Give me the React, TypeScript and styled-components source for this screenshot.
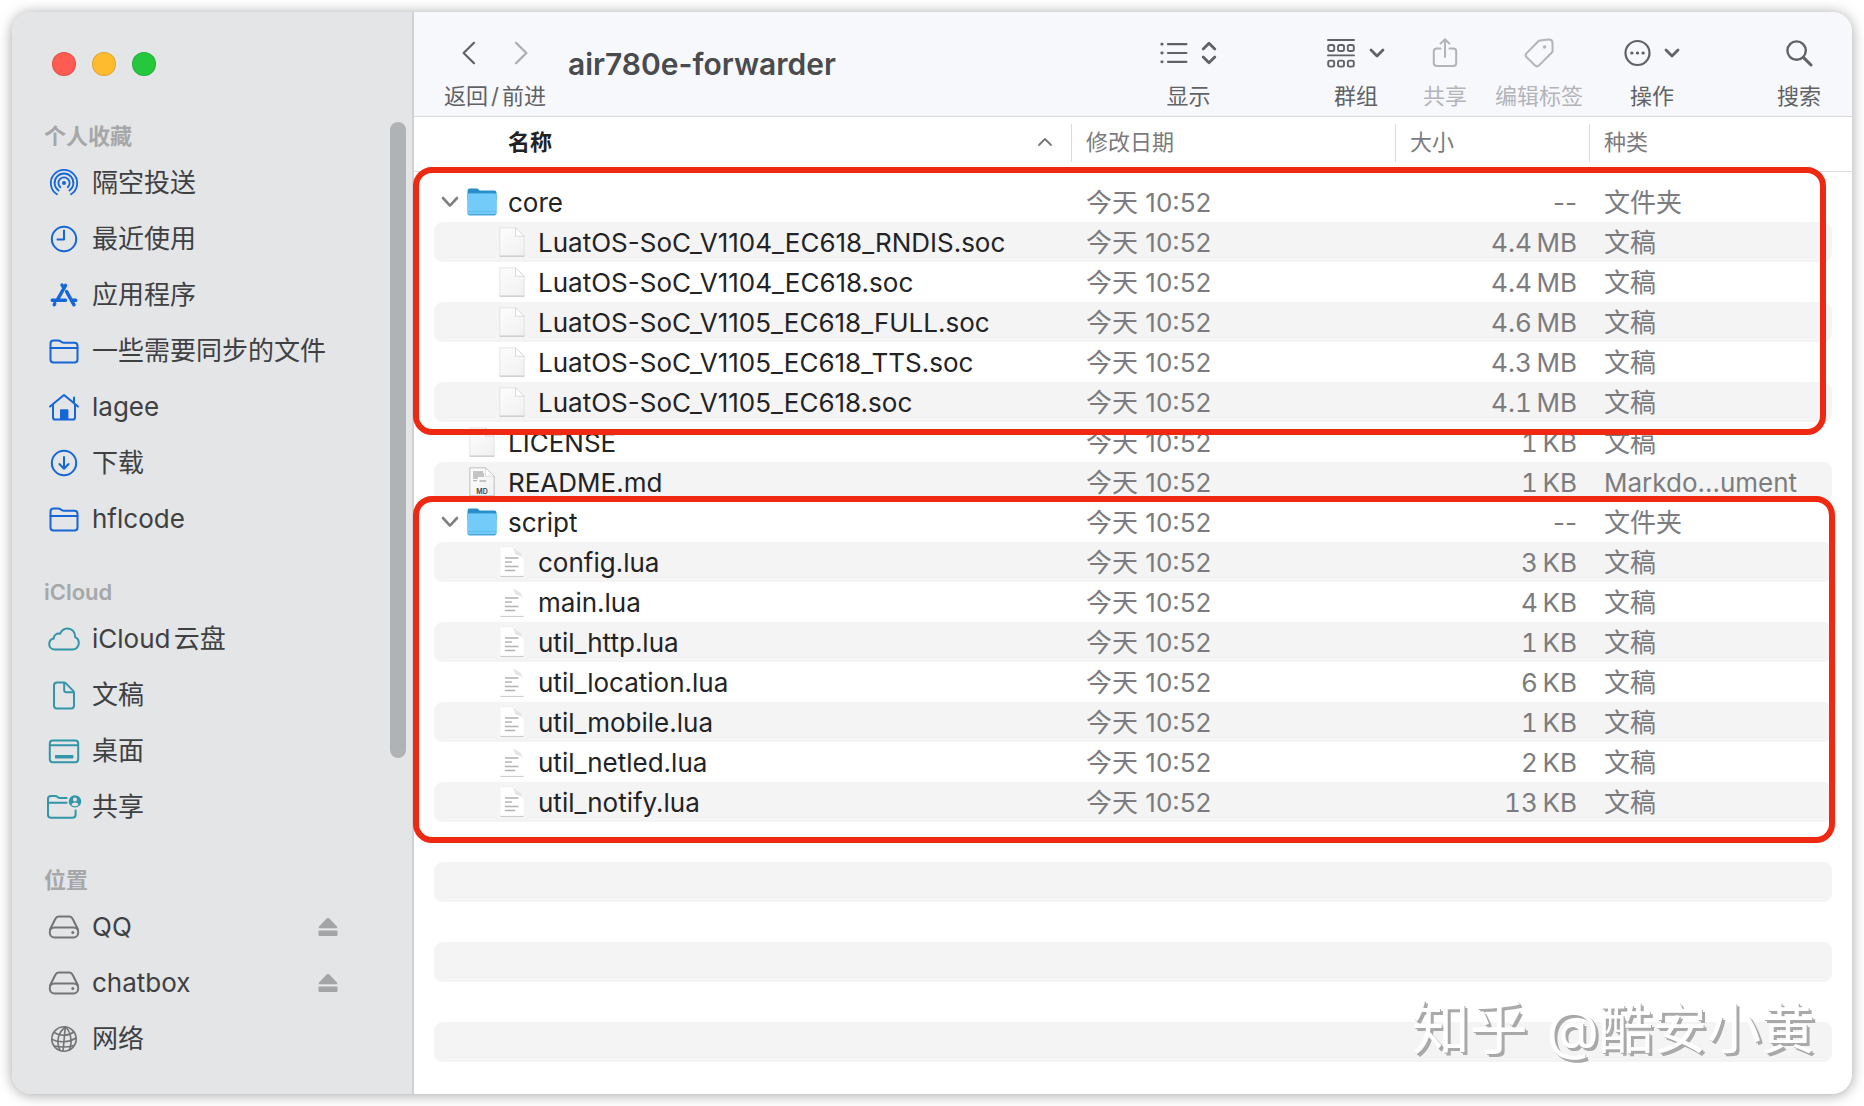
import React from "react";
import styled, { createGlobalStyle } from "styled-components";

const GlobalStyle = createGlobalStyle`
  *, *::before, *::after { box-sizing: border-box; }
  body {
    margin: 0;
    background: #fff;
    font-family: Inter, "Noto Sans CJK SC", sans-serif;
    font-size: 26px;
    text-autospace: normal;
  }
  button {
    font: inherit;
    color: inherit;
    background: none;
    border: 0;
    padding: 0;
  }
  svg { display: block; flex: none; }
`;

/* ---------- window ---------- */

const Window = styled.div`
  display: grid;
  grid-template-columns: 402px minmax(0, 1fr);
  margin: 12px;
  min-height: calc(100vh - 24px);
  border-radius: 20px;
  background: #fff;
  box-shadow: 0 1px 14px rgba(0, 0, 0, 0.36);
`;

/* ---------- sidebar ---------- */

const Sidebar = styled.aside`
  position: relative;
  display: flex;
  flex-direction: column;
  gap: 26px;
  border-right: 2px solid #cfd1d3;
  border-radius: 20px 0 0 20px;
  background: #e3e5e6;
`;

const Lights = styled.div`
  display: flex;
  gap: 16px;
  padding: 40px 40px 15px;
`;

const Light = styled.button<{ $color: string }>`
  width: 24px;
  height: 24px;
  border-radius: 50%;
  background: ${(p) => p.$color};
  box-shadow: inset 0 0 0 1px rgba(0, 0, 0, 0.12);
`;

const SectionTitle = styled.h2`
  margin: 0;
  padding-left: 32px;
  font-size: 22px;
  line-height: 38px;
  font-weight: 600;
  color: #a6a7a9;
`;

const PlaceList = styled.ul`
  margin: 0;
  padding: 0;
  list-style: none;
`;

const Place = styled.li`
  display: flex;
  align-items: center;
  justify-content: space-between;
  height: 56px;
  padding: 0 74px 0 36px;
`;

const PlaceLink = styled.a`
  display: flex;
  align-items: center;
  gap: 12px;
  color: #3f4042;
  text-decoration: none;
  white-space: nowrap;
  line-height: 32px;
`;

const PlaceIcon = styled.span<{ $tint: string }>`
  display: flex;
  justify-content: center;
  width: 32px;
  color: ${(p) => p.$tint};
`;

const ScrollThumb = styled.div`
  position: absolute;
  top: 110px;
  right: 6px;
  width: 16px;
  height: 636px;
  border-radius: 8px;
  background: #b0b3b5;
`;

/* ---------- main pane ---------- */

const Main = styled.main`
  position: relative;
  display: flex;
  flex-direction: column;
`;

const Toolbar = styled.header`
  display: flex;
  align-items: flex-start;
  height: 105px;
  padding: 20px 31px 0 30px;
  border-bottom: 1px solid #d9dadd;
  border-top-right-radius: 20px;
  background: #f7f8fc;
  color: #616266;
`;

const Tool = styled.div<{ $before?: number; $faded?: boolean }>`
  display: flex;
  flex-direction: column;
  align-items: center;
  flex: none;
  margin-left: ${(p) => p.$before ?? 0}px;
  opacity: ${(p) => (p.$faded ? 0.45 : 1)};
`;

const ToolIcons = styled.div<{ $gap?: number }>`
  display: flex;
  align-items: center;
  gap: ${(p) => p.$gap ?? 0}px;
  height: 42px;
`;

const ToolButton = styled.button`
  display: flex;
  flex-direction: column;
  align-items: center;
`;

const ToolLabel = styled.span`
  font-size: 22px;
  line-height: 44px;
  white-space: nowrap;
`;

const Slash = styled.span`
  margin: 0 3px;
`;

const Title = styled.h1`
  flex: 1;
  margin: 0 0 0 22px;
  font-size: 30px;
  line-height: 64px;
  font-weight: 600;
  color: #4a4b4e;
`;

/* ---------- file table ---------- */

const FileTable = styled.table`
  width: 100%;
  table-layout: fixed;
  border-collapse: separate;
  border-spacing: 0;
`;

const Col = styled.col<{ $width?: number }>`
  width: ${(p) => (p.$width ? `${p.$width}px` : "auto")};
`;

const HeadCell = styled.th`
  height: 55px;
  padding: 0 0 2px;
  border-bottom: 1px solid #dcdcdc;
  text-align: left;
  font-weight: 400;
  color: #7b7b7d;
`;

const HeadButton = styled.button<{ $primary?: boolean }>`
  display: flex;
  align-items: center;
  justify-content: space-between;
  width: 100%;
  height: 38px;
  padding: ${(p) => (p.$primary ? "0 18px 2px 74px" : "0 14px 2px")};
  border-left: ${(p) => (p.$primary ? "0" : "1px solid #dcdcdc")};
  font-size: 22px;
  line-height: 36px;
  font-weight: ${(p) => (p.$primary ? 700 : 400)};
  color: ${(p) => (p.$primary ? "#222" : "inherit")};
`;

const Spacer = styled.td`
  height: 10px;
  padding: 0;
`;

const Cell = styled.td<{ $right?: boolean; $tabular?: boolean }>`
  height: 40px;
  padding: 2px 12px 0 15px;
  line-height: 38px;
  text-align: ${(p) => (p.$right ? "right" : "left")};
  font-variant-numeric: ${(p) => (p.$tabular ? "tabular-nums" : "normal")};
  white-space: nowrap;
  color: #7c7c7e;
`;

const NameCell = styled(Cell)`
  padding: 0;
  color: #232325;
`;

const Gutter = styled.td`
  padding: 0;
`;

const Row = styled.tr<{ $striped: boolean }>`
  ${Cell} { background: ${(p) => (p.$striped ? "#f4f4f4" : "transparent")}; }
  ${Cell}:nth-child(2) { border-radius: 9px 0 0 9px; }
  ${Cell}:nth-child(5) { border-radius: 0 9px 9px 0; }
`;

const NameLine = styled.div<{ $nested: boolean }>`
  display: flex;
  align-items: center;
  height: 40px;
  padding-left: ${(p) => (p.$nested ? 30 : 0)}px;
`;

const FileName = styled.span`
  padding-top: 2px;
`;

const Disclosure = styled.button`
  display: flex;
  justify-content: center;
  width: 32px;
`;

const NoDisclosure = styled.span`
  width: 32px;
`;

const FileIcon = styled.span`
  display: flex;
  justify-content: center;
  width: 32px;
  margin-right: 10px;
`;

/* ---------- annotations ---------- */

const Highlight = styled.div<{ $top: number; $height: number; $right: number }>`
  position: absolute;
  top: ${(p) => p.$top}px;
  left: -1px;
  right: ${(p) => p.$right}px;
  height: ${(p) => p.$height}px;
  border: 6px solid #ef2812;
  border-radius: 19px;
  pointer-events: none;
`;

const Watermark = styled.div`
  position: absolute;
  right: 37px;
  bottom: 24px;
  font-size: 54px;
  line-height: 80px;
  color: #fff;
  text-shadow: 1px 1px 0 #a9a9a9, 3px 3px 0 #a9a9a9;
  white-space: nowrap;
  pointer-events: none;
`;

const WatermarkBrand = styled.span`
  margin-right: 4px;
  font-size: 58px;
`;

/* ---------- icons ---------- */

type IconProps = { w: number; h: number; sw?: number; children: React.ReactNode };
const Icon = ({ w, h, sw = 2, children }: IconProps) => (
  <svg width={w} height={h} viewBox={`0 0 ${w} ${h}`} fill="none" stroke="currentColor"
    strokeWidth={sw} strokeLinecap="round" strokeLinejoin="round" aria-hidden="true">
    {children}
  </svg>
);

const AirDropIcon = () => (
  <Icon w={30} h={30} sw={1.8}>
    <path d="M8 26.3A13.2 13.2 0 1 1 22 26.3" />
    <path d="M9.6 22.6A9.4 9.4 0 1 1 20.4 22.6" />
    <path d="M11.3 19.2A5.6 5.6 0 1 1 18.7 19.2" />
    <circle cx="15" cy="15" r="2" fill="currentColor" stroke="none" />
  </Icon>
);
const ClockIcon = () => (
  <Icon w={28} h={28}>
    <circle cx="14" cy="14" r="12.2" />
    <path d="M14 5.5V14.5H7.5" />
  </Icon>
);
const AppsIcon = () => (
  <Icon w={28} h={26} sw={3.4}>
    <path d="M15.6 3.4L7.6 17.4M12 3L13.8 6M2.2 18.2H15.6M22 18.2H25.8" />
    <path d="M16.6 9.6L24 22.8M4.8 21.6L4.2 22.8" />
  </Icon>
);
const FolderIcon = () => (
  <Icon w={30} h={25}>
    <path d="M1.5 20.5V4.6Q1.5 1.5 4.6 1.5H9Q10.6 1.5 11.8 2.6Q13 3.7 14.6 3.7H25.4Q28.5 3.7 28.5 6.8V20.5Q28.5 23.5 25.4 23.5H4.6Q1.5 23.5 1.5 20.5Z" />
    <path d="M1.5 9H28.5" />
  </Icon>
);
const HomeIcon = () => (
  <Icon w={32} h={28}>
    <path d="M2 13.5L16 2L30 13.5M26 10V4.4M5 11.8V24.5Q5 26.6 7.1 26.6H24.9Q27 26.6 27 24.5V11.8" />
    <path d="M13 26V17.2H19.4V26Z" fill="currentColor" />
  </Icon>
);
const DownloadIcon = () => (
  <Icon w={28} h={28}>
    <circle cx="14" cy="14" r="12.2" />
    <path d="M14 8V19.6M9.4 15L14 19.8L18.6 15" />
  </Icon>
);
const CloudIcon = () => (
  <Icon w={32} h={24}>
    <path d="M7 22.6C3.4 22.6 1.2 20 1.2 17C1.2 14.2 3 12 5.8 11.4C5.8 8 9 5.8 12 6.8C13.4 3.4 16.2 1.4 19.4 1.4C24 1.4 27.4 5 27.2 10.2C29.6 11.4 30.9 13.6 30.8 16.2C30.7 19.8 28 22.6 24.6 22.6Z" />
  </Icon>
);
const DocumentIcon = () => (
  <Icon w={24} h={29}>
    <path d="M2 4.5Q2 1.4 5 1.4H11.6Q13 1.4 14 2.4L21 9.6Q22 10.6 22 12V24.4Q22 27.5 19 27.5H5Q2 27.5 2 24.4Z" />
    <path d="M12.2 2V9Q12.2 11.3 14.5 11.3H21.6" />
  </Icon>
);
const DesktopIcon = () => (
  <Icon w={32} h={25}>
    <rect x="1.8" y="1.5" width="28.4" height="21.8" rx="3" />
    <path d="M2 6.2H30" />
    <rect x="7" y="16" width="18.4" height="3.6" rx="0.8" fill="currentColor" stroke="none" />
  </Icon>
);
const SharedFolderIcon = () => (
  <Icon w={36} h={26}>
    <path d="M20.6 4H14.2Q12.8 4 11.6 2.9Q10.4 1.9 9 1.9H5Q2 1.9 2 4.9V20.8Q2 23.8 5 23.8H26.4Q29.6 23.8 29.6 20.8V16.4" />
    <path d="M2 8.8H20.6" />
    <circle cx="29" cy="7.4" r="6.2" fill="currentColor" stroke="none" />
    <circle cx="29" cy="5.6" r="2" fill="#e3e5e6" stroke="none" />
    <path d="M25.4 11Q26 8.6 29 8.6T32.6 11Q29 13.4 25.4 11Z" fill="#e3e5e6" stroke="none" />
  </Icon>
);
const DiskIcon = () => (
  <Icon w={32} h={24}>
    <path d="M2 14.5L7.4 3.8Q8.4 1.6 10.8 1.6H21.2Q23.6 1.6 24.6 3.8L30 14.5" />
    <rect x="1.8" y="12.6" width="28.4" height="9.8" rx="4.6" />
    <circle cx="24.8" cy="17.4" r="1.5" fill="currentColor" stroke="none" />
  </Icon>
);
const GlobeIcon = () => (
  <Icon w={28} h={28} sw={1.6}>
    <circle cx="14" cy="14" r="12.2" />
    <path d="M15.5 2C8 7 6 17 10 25.4M15.5 2C14.4 8 14 18 13 26M15.5 2C21 7 22.5 17 19.5 24.8" />
    <path d="M4 7.4C9 11 18 11.4 23.6 7M2 14.4C9 18 19 17.6 26 13M4.4 21C10 22.4 18 22.2 24 20.4" />
  </Icon>
);
const EjectIcon = () => (
  <svg width="20" height="20" viewBox="0 0 20 20" fill="#a3a4a6" aria-hidden="true">
    <path d="M9 1.3Q10 0.3 11 1.3L19 9.6Q19.9 11.2 18.2 11.3H1.8Q0.1 11.2 1 9.6Z" />
    <rect x="0.5" y="13.6" width="19" height="5.4" rx="1" />
  </svg>
);
const ChevronDown = () => (
  <Icon w={16} h={10} sw={2.8}>
    <path d="M2 2L8 8L14 2" />
  </Icon>
);
const BackIcon = () => (
  <Icon w={16} h={24} sw={2.2}>
    <path d="M13 1.8L2.6 12L13 22.2" />
  </Icon>
);
const ForwardIcon = () => (
  <Icon w={16} h={24} sw={2.2}>
    <path d="M3 1.8L13.4 12L3 22.2" opacity="0.5" />
  </Icon>
);
const ListIcon = () => (
  <Icon w={28} h={22} sw={2.2}>
    <path d="M8 2.2H26.4M8 11H26.4M8 19.8H26.4" />
    <path d="M1.8 2.2H2.2M1.8 11H2.2M1.8 19.8H2.2" strokeWidth={2.8} />
  </Icon>
);
const UpDownIcon = () => (
  <Icon w={16} h={24} sw={2.8}>
    <path d="M2.2 8L8 2.2L13.8 8M2.2 16L8 21.8L13.8 16" />
  </Icon>
);
const GroupIcon = () => (
  <Icon w={28} h={30} sw={1.9}>
    <path d="M1 2H27M1 17.4H27" />
    {[7, 22.6].map((y) =>
      [1.2, 11, 20.8].map((x) => (
        <rect key={`${x}-${y}`} x={x} y={y} width="6" height="6" rx="1.8" />
      ))
    )}
  </Icon>
);
const ShareIcon = () => (
  <Icon w={26} h={32}>
    <path d="M8.5 11.5H4.8Q1.8 11.5 1.8 14.5V26Q1.8 29 4.8 29H21.2Q24.2 29 24.2 26V14.5Q24.2 11.5 21.2 11.5H17.5" />
    <path d="M13 20V2.2M8.6 6.6L13 2.2L17.4 6.6" />
  </Icon>
);
const TagIcon = () => (
  <Icon w={30} h={30}>
    <path d="M16 2.6L24.6 1.6Q28.2 1.4 28.5 4.8L28.6 12.4Q28.6 13.8 27.6 14.8L14.8 27.6Q13 29.2 11.2 27.6L2.4 19Q0.8 17.2 2.4 15.4L13.8 3.8Q14.8 2.8 16 2.6Z" />
    <circle cx="20.6" cy="9" r="1.7" fill="currentColor" stroke="none" />
  </Icon>
);
const MoreIcon = () => (
  <Icon w={27} h={28} sw={2.2}>
    <circle cx="13.5" cy="14" r="12" />
    <path d="M7.8 14H8M13.4 14H13.6M19 14H19.2" strokeWidth={3.2} />
  </Icon>
);
const SearchIcon = () => (
  <Icon w={28} h={28} sw={2.4}>
    <circle cx="11.6" cy="11.6" r="9.2" />
    <path d="M18.6 18.6L26 26" strokeWidth={3} />
  </Icon>
);
const SortIcon = () => (
  <Icon w={16} h={10} sw={1.8}>
    <path d="M2 8L8 2L14 8" stroke="#77787a" />
  </Icon>
);

const BlueFolder = () => (
  <svg width="30" height="28" viewBox="0 0 30 28" aria-hidden="true">
    <path d="M0.5 3Q0.5 0.6 2.8 0.6H9.5Q11 0.6 12 2L12.6 2.6H27.4Q29.5 2.6 29.5 4.8V12H0.5Z" fill="#2a8fc9" />
    <rect x="0.5" y="5.6" width="29" height="21.8" rx="1.8" fill="#4aa6d9" />
    <rect x="0.5" y="5.6" width="29" height="20.4" rx="1.6" fill="#73cbf9" />
    <path d="M1 23.6H29" stroke="#5bb8ea" strokeWidth="0.8" />
  </svg>
);
const Sheet = ({ children }: { children?: React.ReactNode }) => (
  <svg width="26" height="30" viewBox="0 0 26 30" aria-hidden="true">
    <defs>
      <linearGradient id="sheet" x1="0" y1="0" x2="1" y2="1">
        <stop offset="0" stopColor="#fdfdfd" />
        <stop offset="1" stopColor="#f0f0f0" />
      </linearGradient>
    </defs>
    <path d="M0.8 0.8H16.6L25.2 9.2V29H0.8Z" fill="url(#sheet)" stroke="#dedede" strokeWidth="0.8" />
    <path d="M16.6 0.8V9.2H25.2Z" fill="#fff" stroke="#d2d2d2" strokeWidth="0.8" />
    <path d="M0.6 29.2H25.4" stroke="#c2c2c2" strokeWidth="1" />
    {children}
  </svg>
);
const MarkdownSheet = () => (
  <Sheet>
    <path d="M0.8 0.8H16.6L25.2 9.2V29H0.8Z" fill="none" stroke="#c6c6c6" strokeWidth="1" />
    <path d="M4 5H14M4 7H15M4 9H15M4 11H9M10.5 14H17M4 13.6H8" stroke="#b3b3b3" strokeWidth="1.3" />
    <text x="13" y="27" textAnchor="middle" fontFamily="Inter, sans-serif" fontSize="7" fontWeight="600" fill="#444">MD</text>
  </Sheet>
);
const TextSheet = () => (
  <svg width="24" height="30" viewBox="0 0 24 30" aria-hidden="true">
    <path d="M0.5 0.5H13Q14.5 6 17 7.5Q20 8 23.5 10.5V29H0.5Z" fill="#fff" />
    <path d="M11 0.8Q14 1.2 14.6 6Q15 8 17.6 8.2Q21 8.4 22.6 11Q22 6.6 18.6 4.6Q14.4 1.4 11 0.8Z" fill="#e6e6e6" />
    <path d="M5 11H18.4M5 15H12M5 19.4H18.4M5 23.6H15" stroke="#b2b2b2" strokeWidth="1.5" />
    <path d="M0.5 29.4H23.5" stroke="#c9c9c9" strokeWidth="1" />
  </svg>
);

/* ---------- data ---------- */

const BLUE = "#1666d8";
const TEAL = "#3295a8";
const GREY = "#737477";

type PlaceData = { label: string; icon: React.ReactNode; eject?: boolean };
const sections: { title: string; tint: string; places: PlaceData[] }[] = [
  {
    title: "个人收藏",
    tint: BLUE,
    places: [
      { label: "隔空投送", icon: <AirDropIcon /> },
      { label: "最近使用", icon: <ClockIcon /> },
      { label: "应用程序", icon: <AppsIcon /> },
      { label: "一些需要同步的文件", icon: <FolderIcon /> },
      { label: "lagee", icon: <HomeIcon /> },
      { label: "下载", icon: <DownloadIcon /> },
      { label: "hflcode", icon: <FolderIcon /> },
    ],
  },
  {
    title: "iCloud",
    tint: TEAL,
    places: [
      { label: "iCloud云盘", icon: <CloudIcon /> },
      { label: "文稿", icon: <DocumentIcon /> },
      { label: "桌面", icon: <DesktopIcon /> },
      { label: "共享", icon: <SharedFolderIcon /> },
    ],
  },
  {
    title: "位置",
    tint: GREY,
    places: [
      { label: "QQ", icon: <DiskIcon />, eject: true },
      { label: "chatbox", icon: <DiskIcon />, eject: true },
      { label: "网络", icon: <GlobeIcon /> },
    ],
  },
];

type FileKind = "folder" | "blank" | "md" | "text";
type FileData = { name: string; size: string; type: string; kind: FileKind; nested?: boolean };
const blob = (name: string, size: string): FileData => ({ name, size, type: "文稿", kind: "blank", nested: true });
const lua = (name: string, size: string): FileData => ({ name, size, type: "文稿", kind: "text", nested: true });

const files: FileData[] = [
  { name: "core", size: "--", type: "文件夹", kind: "folder" },
  blob("LuatOS-SoC_V1104_EC618_RNDIS.soc", "4.4\u2009MB"),
  blob("LuatOS-SoC_V1104_EC618.soc", "4.4\u2009MB"),
  blob("LuatOS-SoC_V1105_EC618_FULL.soc", "4.6\u2009MB"),
  blob("LuatOS-SoC_V1105_EC618_TTS.soc", "4.3\u2009MB"),
  blob("LuatOS-SoC_V1105_EC618.soc", "4.1\u2009MB"),
  { name: "LICENSE", size: "1\u2009KB", type: "文稿", kind: "blank" },
  { name: "README.md", size: "1\u2009KB", type: "Markdo...ument", kind: "md" },
  { name: "script", size: "--", type: "文件夹", kind: "folder" },
  lua("config.lua", "3\u2009KB"),
  lua("main.lua", "4\u2009KB"),
  lua("util_http.lua", "1\u2009KB"),
  lua("util_location.lua", "6\u2009KB"),
  lua("util_mobile.lua", "1\u2009KB"),
  lua("util_netled.lua", "2\u2009KB"),
  lua("util_notify.lua", "13\u2009KB"),
];

const fileIcons: Record<FileKind, React.ReactNode> = {
  folder: <BlueFolder />,
  blank: <Sheet />,
  md: <MarkdownSheet />,
  text: <TextSheet />,
};

const EMPTY_ROWS = 6;

/* ---------- page ---------- */

export default function App() {
  return (
    <>
      <GlobalStyle />
      <Window>
        <Sidebar>
          <Lights>
            <Light $color="#fe5b52" aria-label="关闭" />
            <Light $color="#fdbb2d" aria-label="最小化" />
            <Light $color="#25c83c" aria-label="缩放" />
          </Lights>
          {sections.map((section) => (
            <nav key={section.title} aria-label={section.title}>
              <SectionTitle>{section.title}</SectionTitle>
              <PlaceList>
                {section.places.map((place) => (
                  <Place key={place.label}>
                    <PlaceLink href="#">
                      <PlaceIcon $tint={section.tint}>{place.icon}</PlaceIcon>
                      {place.label}
                    </PlaceLink>
                    {place.eject && (
                      <button aria-label="推出">
                        <EjectIcon />
                      </button>
                    )}
                  </Place>
                ))}
              </PlaceList>
            </nav>
          ))}
          <ScrollThumb />
        </Sidebar>

        <Main>
          <Toolbar>
            <Tool>
              <ToolIcons $gap={36}>
                <button aria-label="返回"><BackIcon /></button>
                <button aria-label="前进"><ForwardIcon /></button>
              </ToolIcons>
              <ToolLabel>返回<Slash>/</Slash>前进</ToolLabel>
            </Tool>
            <Title>air780e-forwarder</Title>
            <Tool>
              <ToolButton>
                <ToolIcons $gap={13}><ListIcon /><UpDownIcon /></ToolIcons>
                <ToolLabel>显示</ToolLabel>
              </ToolButton>
            </Tool>
            <Tool $before={110}>
              <ToolButton>
                <ToolIcons $gap={14}><GroupIcon /><ChevronDown /></ToolIcons>
                <ToolLabel>群组</ToolLabel>
              </ToolButton>
            </Tool>
            <Tool $before={38} $faded>
              <ToolButton disabled>
                <ToolIcons><ShareIcon /></ToolIcons>
                <ToolLabel>共享</ToolLabel>
              </ToolButton>
            </Tool>
            <Tool $before={28} $faded>
              <ToolButton disabled>
                <ToolIcons><TagIcon /></ToolIcons>
                <ToolLabel>编辑标签</ToolLabel>
              </ToolButton>
            </Tool>
            <Tool $before={41}>
              <ToolButton>
                <ToolIcons $gap={13}><MoreIcon /><ChevronDown /></ToolIcons>
                <ToolLabel>操作</ToolLabel>
              </ToolButton>
            </Tool>
            <Tool $before={97}>
              <ToolButton>
                <ToolIcons><SearchIcon /></ToolIcons>
                <ToolLabel>搜索</ToolLabel>
              </ToolButton>
            </Tool>
          </Toolbar>

          <FileTable>
            <colgroup>
              <Col $width={20} />
              <Col />
              <Col $width={324} />
              <Col $width={194} />
              <Col $width={243} />
              <Col $width={20} />
            </colgroup>
            <thead>
              <tr>
                <HeadCell as="td" />
                <HeadCell aria-sort="ascending">
                  <HeadButton $primary>名称<SortIcon /></HeadButton>
                </HeadCell>
                <HeadCell><HeadButton>修改日期</HeadButton></HeadCell>
                <HeadCell><HeadButton>大小</HeadButton></HeadCell>
                <HeadCell><HeadButton>种类</HeadButton></HeadCell>
                <HeadCell as="td" />
              </tr>
            </thead>
            <tbody>
              <tr><Spacer colSpan={6} /></tr>
              {files.map((file, i) => (
                <Row key={file.name} $striped={i % 2 === 1}>
                  <Gutter />
                  <NameCell>
                    <NameLine $nested={!!file.nested}>
                      {file.kind === "folder" ? (
                        <Disclosure aria-label={`折叠 ${file.name}`} aria-expanded="true">
                          <Icon w={18} h={12} sw={2.6}>
                            <path d="M2 2L9 9.6L16 2" stroke="#808080" />
                          </Icon>
                        </Disclosure>
                      ) : (
                        <NoDisclosure />
                      )}
                      <FileIcon>{fileIcons[file.kind]}</FileIcon>
                      <FileName>{file.name}</FileName>
                    </NameLine>
                  </NameCell>
                  <Cell>今天 10:52</Cell>
                  <Cell $right $tabular={file.kind !== "folder"}>{file.size}</Cell>
                  <Cell>{file.type}</Cell>
                  <Gutter />
                </Row>
              ))}
              {Array.from({ length: EMPTY_ROWS }, (_, i) => (
                <Row key={i} $striped={i % 2 === 1}>
                  <Gutter />
                  <NameCell />
                  <Cell />
                  <Cell />
                  <Cell />
                  <Gutter />
                </Row>
              ))}
            </tbody>
          </FileTable>

          <Highlight $top={155} $height={268} $right={26} />
          <Highlight $top={484} $height={347} $right={17} />
          <Watermark><WatermarkBrand>知乎</WatermarkBrand> @酷安小黄</Watermark>
        </Main>
      </Window>
    </>
  );
}
